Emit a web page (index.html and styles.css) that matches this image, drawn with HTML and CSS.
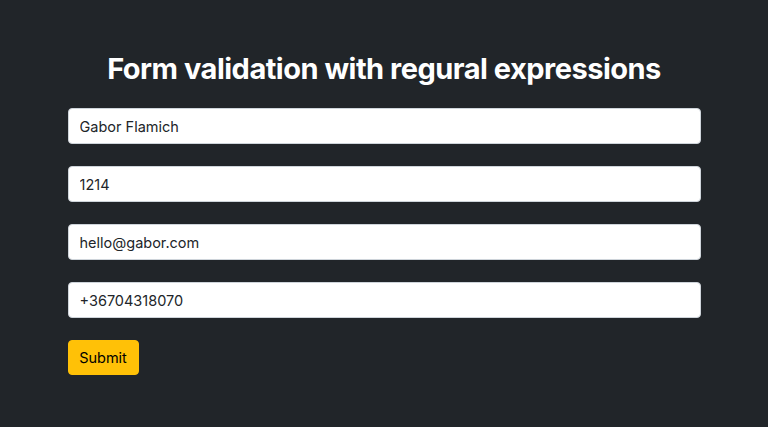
FILE: index.html
```html
<!DOCTYPE html>
<html>
<head>
<meta charset="utf-8">
<link rel="stylesheet" href="styles.css">
</head>
<body>
<main class="container">
  <h1 class="title">Form validation with regural expressions</h1>
  <form class="form">
    <input class="field" type="text" value="Gabor Flamich">
    <input class="field" type="text" value="1214">
    <input class="field" type="text" value="hello@gabor.com">
    <input class="field" type="text" value="+36704318070">
    <div class="actions"><button class="btn" type="button">Submit</button></div>
  </form>
</main>
</body>
</html>
```
FILE: styles.css
```css
html, body {
  margin: 0;
  padding: 0;
  background: #212529;
  height: 100%;
}
body {
  font-family: Inter, "Liberation Sans", sans-serif;
  color: #fff;
}
.container {
  width: 633px;
  margin: 0 auto;
  padding-top: 52px;
}
.title {
  margin: 0 0 22px;
  font-size: 29px;
  font-weight: 700;
  line-height: 34px;
  text-align: center;
  letter-spacing: -0.5px;
}
.form {
  display: flex;
  flex-direction: column;
  gap: 22px;
}
.field {
  box-sizing: border-box;
  width: 100%;
  height: 36px;
  border: 1px solid #ced4da;
  border-radius: 4px;
  background: #fff;
  padding: 0 11px;
  font-family: Inter, "Liberation Sans", sans-serif;
  font-size: 14.5px;
  color: #212529;
  outline: none;
}
.actions {
  display: flex;
}
.btn {
  box-sizing: border-box;
  height: 35px;
  width: 71px;
  border: 1px solid #ffc107;
  border-radius: 4px;
  background: #ffc107;
  color: #000;
  font-family: Inter, "Liberation Sans", sans-serif;
  font-size: 14.5px;
  padding: 0;
}
```
